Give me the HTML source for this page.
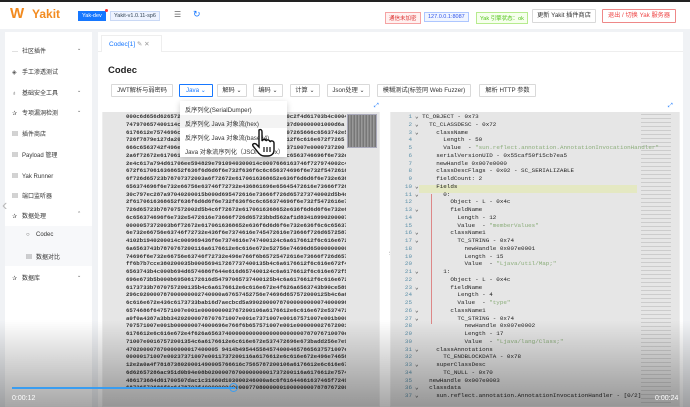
<!DOCTYPE html><html><head><meta charset="utf-8"><style>
*{box-sizing:border-box;margin:0;padding:0}
body{width:690px;height:407px;overflow:hidden;background:#f0f2f5;font-family:"Liberation Sans","Noto Sans CJK SC",sans-serif;position:relative;font-size:7px;color:#333}
.abs{position:absolute}
.top{left:0;top:0;width:690px;height:29px;background:#fff;border-top:2px solid #222}
.tag{position:absolute;font-size:5.5px;padding:1px 3px;border:1px solid}
.btn{position:absolute;border:1px solid #d9d9d9;background:#fff;font-size:6.2px;height:13px;line-height:11px;text-align:center;border-radius:1px}
.side{left:5px;top:32px;width:87px;height:375px;background:#fff}
.si{position:absolute;left:12px;font-size:6px;color:#333}
.si i{font-style:normal;display:inline-block;width:10px;color:#555}
.chev{position:absolute;left:77px;font-size:5px;color:#555}
.hex{position:absolute;left:126px;top:113px;width:220px;overflow:hidden;font-family:"Liberation Mono",monospace;font-size:5.7px;line-height:7.75px;font-weight:bold;color:#333;white-space:pre}
.code{position:absolute;left:398px;top:113px;font-family:"Liberation Mono",monospace;font-size:5.9px;line-height:7.75px;color:#222;white-space:pre}
.ln{color:#5a8fa8;display:inline-block;width:14px;text-align:right;margin-right:3px}
.s{color:#8bad7a}
</style></head><body>
<div class="abs top"></div>
<div class="abs" style="left:10px;top:5px;color:#f28b20;font-size:15px;font-weight:bold;letter-spacing:-1px">W</div>
<div class="abs" style="left:32px;top:7px;color:#f28b20;font-size:12px;font-weight:bold">Yakit</div>
<div class="tag" style="left:78px;top:11px;background:#1677ff;color:#fff;border-color:#1677ff">Yak-dev</div>
<div class="abs" style="left:105px;top:9px;width:3px;height:3px;border-radius:50%;background:#f33"></div>
<div class="tag" style="left:110px;top:11px;background:#eef3ff;color:#345;border-color:#c9d8f5">Yakit-v1.0.11-sp6</div>
<div class="abs" style="left:174px;top:10px;color:#666;font-size:8px">☰</div>
<div class="abs" style="left:193px;top:9px;color:#1677ff;font-size:9px">↻</div>
<div class="tag" style="left:385px;top:12px;background:#fff1f0;color:#d33;border-color:#f5a3a3">通信未加密</div>
<div class="tag" style="left:424px;top:12px;background:#f0f5ff;color:#2f54eb;border-color:#adc6ff">127.0.0.1:8087</div>
<div class="tag" style="left:476px;top:12px;background:#f6ffed;color:#52c41a;border-color:#b7eb8f">Yak 引擎状态：ok</div>
<div class="btn" style="left:532px;top:9px;width:64px;height:14px;line-height:12px">更新 Yakit 插件商店</div>
<div class="btn" style="left:602px;top:9px;width:74px;height:14px;line-height:12px;color:#e44;border-color:#e88">退出 / 切换 Yak 服务器</div>

<div class="abs side"></div>
<div class="si" style="top:46px"><i>···</i>社区插件</div><div class="chev" style="top:46px">⌄</div>
<div class="si" style="top:67px"><i>◈</i>手工渗透测试</div>
<div class="si" style="top:88px"><i>♁</i>基础安全工具</div><div class="chev" style="top:88px">⌄</div>
<div class="si" style="top:108px"><i>✰</i>专项漏洞检测</div><div class="chev" style="top:108px">⌄</div>
<div class="si" style="top:129px"><i>▤</i>插件商店</div>
<div class="si" style="top:150px"><i>▤</i>Payload 管理</div>
<div class="si" style="top:171px"><i>▤</i>Yak Runner</div>
<div class="si" style="top:191px"><i>▤</i>端口监听器</div>
<div class="si" style="top:211px"><i>✰</i>数据处理</div><div class="chev" style="top:211px">⌃</div>
<div class="abs" style="left:5px;top:226px;width:87px;height:40px;background:#f7f8fa"></div>
<div class="si" style="left:26px;top:232px"><i>○</i>Codec</div>
<div class="si" style="left:26px;top:252px"><i>▤</i>数据对比</div>
<div class="si" style="top:273px"><i>✰</i>数据库</div><div class="chev" style="top:273px">⌄</div>
<div class="abs" style="left:2px;top:197px;color:#bbb;font-size:16px">‹</div>

<div class="abs" style="left:98px;top:32px;width:585px;height:375px;background:#fff"></div>
<div class="abs" style="left:98px;top:51px;width:585px;height:1px;background:#eee"></div>
<div class="abs" style="left:101px;top:35px;width:61px;height:17px;border:1px solid #eee;border-bottom:none;background:#fff"></div>
<div class="abs" style="left:109px;top:40px;color:#1677ff;font-size:6.5px">Codec[1] <span style="color:#999">✎ ✕</span></div>
<div class="abs" style="left:108px;top:65px;font-size:9.5px;font-weight:bold;color:#222">Codec</div>
<div class="btn" style="left:111px;top:84px;width:62px">JWT解析与弱密码</div>
<div class="btn" style="left:179px;top:84px;width:34px;color:#1677ff;border-color:#1677ff">Java ⌄</div>
<div class="btn" style="left:217px;top:84px;width:30px">解码 ⌄</div>
<div class="btn" style="left:253px;top:84px;width:30px">编码 ⌄</div>
<div class="btn" style="left:290px;top:84px;width:30px">计算 ⌄</div>
<div class="btn" style="left:327px;top:84px;width:43px">Json处理 ⌄</div>
<div class="btn" style="left:377px;top:84px;width:94px">模糊测试(标签同 Web Fuzzer)</div>
<div class="btn" style="left:479px;top:84px;width:57px">解析 HTTP 参数</div>

<div class="abs" style="left:102px;top:101px;width:278px;height:306px;background:#e6e6e6;border:1px solid #eee"></div>
<div class="abs" style="left:102px;top:101px;width:278px;height:11px;background:#fff"></div>
<div class="abs" style="left:374px;top:103px;color:#1677ff;font-size:6px">⤢</div>
<div class="abs" style="left:347px;top:114px;width:30px;height:34px;background:repeating-linear-gradient(90deg,#777 0 1px,#999 1px 2px,#888 2px 3px);border:1px solid #aab"></div>
<div class="hex">000c6d656d62657250000000000000000000000000000000c2f4d61703b4c0004
747970657400114c6a0000000000000000000000000000737d00000001000d6a
6176612e7574696c2e0000000000000000000000000000007265666c6563742e50
726f7879e127da20cc0000000000000000000000000000812f6c616e672f7265
666c6563742f496e7000000000000000000000000000007371007e0000737200
2a6f72672e6170616368652e636f6d6d6f6e732e636f6c6c6563746696f6e732e6d6170
2e4c617a794d61706ee594829e7910940300014c0007666163746f727974002c4c6f72
672f6170616368652f636f6d6d6f6e732f636f6c6c656374696f6e732f5472616e7366
6f726d65723b78707372003a6f72672e6170616368652e636f6d6d6f6e732e636f6c6c
656374696f6e732e66756e63746f72732e436861696e65645472616e73666f726d6572
30c797ec287a97040200015b000d695472616e73666f726d657273740002d5b4c6f7267
2f6170616368652f636f6d6d6f6e732f636f6c6c656374696f6e732f5472616e73666f
726d65723b78707572002d5b4c6f72672e6170616368652e636f6d6d6f6e732e636f6c
6c656374696f6e732e5472616e73666f726d65723bbd562af1d83418990200007870000
0000057372003b6f72672e6170616368652e636f6d6d6f6e732e636f6c6c656374696f
6e732e66756e63746f72732e436f6e7374616e745472616e73666f726d657258769011
4102b1940200014c000969436f6e7374616e747400124c6a6176612f6c616e672f4f62
6a6563743b7870767200116a6176612e6c616e672e52756e74696d650000000000000
74696f6e732e66756e63746f72732e496e766f6b65725472616e73666f726d657287e8
ff6b7b7cce380200035b000569417267737400135b4c6a6176612f6c616e672f4f626a
6563743b4c000b694d6574686f644e616d657400124c6a6176612f6c616e672f537472
696e673b5b000b69506172616d54797065737400125b4c6a6176612f6c616e672f436c
6173733b7870757200135b4c6a6176612e6c616e672e4f626a6563743b90ce589f1073
296c020000787000000002740000a67657452756e74696d657572000125b4c6a6176612e
6c616e672e436c6173733bab16d7aecbcd5a990200007870000000000740000967657440
6574686f647571007e001e000000002767200106a6176612e6c616e672e537472696e67
a0f0a4387a3bb34202000078707671007e001e7371007e00167571007e001b00000002
707571007e001b000000074000696e766f6b657571007e001e000000027672001006a
6176612e6c616e672e4f626a6563740000000000000000000000787076710070e001b73
71007e00167572001354c6a6176612e6c616e672e537472696e673badd256e7e91d7b
470200007870000000017400005 9414b4954455845740004657865637571007e001e00
00000171007e00237371007e0011737200116a6176612e6c616e672e496e7465676572
12e2a0a4f7818738020001490005766616c7565787200106a6176612e6c616e672e4e75
6d62657286ac951d0b94e08b0200007870000000001737200116a6176612e7574696c2e
486173684d61700507dac1c31660d103000246000a6c6f61644661637465f72490000974
68726573686f6c6478703f4000000000000077080000001000000007878767200126a</div>

<div class="abs" style="left:389px;top:249px;color:#888;font-size:6px">⇆</div>

<div class="abs" style="left:390px;top:101px;width:290px;height:306px;background:#e6e6e6;border:1px solid #eee"></div>
<div class="abs" style="left:390px;top:101px;width:290px;height:11px;background:#fff"></div>
<div class="abs" style="left:668px;top:103px;color:#1677ff;font-size:6px">⤢</div>
<div class="abs" style="left:419px;top:185px;width:218px;height:8px;background:#e4e8c2"></div>
<div class="abs" style="left:431px;top:194px;width:1px;height:130px;background:#d88"></div>
<div class="abs" style="left:641px;top:114px;width:30px;height:290px;background:repeating-linear-gradient(180deg,#bbb 0 1px,transparent 1px 4px);opacity:.6"></div>
<div class="code"><span class="ln">1</span>⌄ TC_OBJECT - 0x73
<span class="ln">2</span>⌄   TC_CLASSDESC - 0x72
<span class="ln">3</span>⌄     className
<span class="ln">4</span>        Length - 50
<span class="ln">5</span>        Value  - <span class="s">"sun.reflect.annotation.AnnotationInvocationHandler"</span>
<span class="ln">6</span>      serialVersionUID - 0x55caf50f15cb7ea5
<span class="ln">7</span>      newHandle 0x007e0000
<span class="ln">8</span>      classDescFlags - 0x02 - SC_SERIALIZABLE
<span class="ln">9</span>      fieldCount: 2
<span class="ln">10</span>⌄     Fields
<span class="ln">11</span>⌄       0:
<span class="ln">12</span>          Object - L - 0x4c
<span class="ln">13</span>⌄         fieldName
<span class="ln">14</span>            Length - 12
<span class="ln">15</span>            Value  - <span class="s">"memberValues"</span>
<span class="ln">16</span>⌄         className1
<span class="ln">17</span>⌄           TC_STRING - 0x74
<span class="ln">18</span>              newHandle 0x007e0001
<span class="ln">19</span>              Length - 15
<span class="ln">20</span>              Value  - <span class="s">"Ljava/util/Map;"</span>
<span class="ln">21</span>⌄       1:
<span class="ln">22</span>          Object - L - 0x4c
<span class="ln">23</span>⌄         fieldName
<span class="ln">24</span>            Length - 4
<span class="ln">25</span>            Value  - <span class="s">"type"</span>
<span class="ln">26</span>⌄         className1
<span class="ln">27</span>⌄           TC_STRING - 0x74
<span class="ln">28</span>              newHandle 0x007e0002
<span class="ln">29</span>              Length - 17
<span class="ln">30</span>              Value  - <span class="s">"Ljava/lang/Class;"</span>
<span class="ln">31</span>⌄     classAnnotations
<span class="ln">32</span>        TC_ENDBLOCKDATA - 0x78
<span class="ln">33</span>⌄     superClassDesc
<span class="ln">34</span>        TC_NULL - 0x70
<span class="ln">35</span>    newHandle 0x007e0003
<span class="ln">36</span>⌄   classdata
<span class="ln">37</span>⌄     sun.reflect.annotation.AnnotationInvocationHandler - [0/2]</div>

<div class="abs" style="left:180px;top:101px;width:107px;height:56px;background:#fff;box-shadow:0 2px 6px rgba(0,0,0,.2)"></div>
<div class="abs" style="left:180px;top:115px;width:107px;height:13px;background:#f3f3f3"></div>
<div class="abs" style="left:185px;top:104px;font-size:6.2px;color:#333;line-height:14px">反序列化(SerialDumper)<br>反序列化 Java 对象流(hex)<br>反序列化 Java 对象流(base64)<br>Java 对象流序列化（JSON=&gt;Hex）</div>
<svg class="abs" style="left:252px;top:128px" width="26" height="30" viewBox="0 0 26 30"><path d="M7 2c2-1 3 0 3 2v9c1-2 4-2 4 0 1-2 4-1 4 1 1-2 4-1 4 1v7c0 4-3 6-6 6h-4c-3 0-5-2-7-5l-4-5c-1-2 1-3 3-2l3 3V4z" fill="#fff" stroke="#111" stroke-width="1.4"/><path d="M12 19v5M15 19v5M18 19v5" stroke="#111" stroke-width="1.2"/></svg>

<div class="abs" style="left:0;top:320px;width:690px;height:87px;background:linear-gradient(180deg,rgba(0,0,0,0),rgba(0,0,0,.35))"></div>
<div class="abs" style="left:12px;top:387px;width:223px;height:2px;background:#3a9df0"></div>
<div class="abs" style="left:229px;top:383px;width:9px;height:9px;border-radius:50%;border:1.5px solid #3a9df0"></div>
<div class="abs" style="left:12px;top:395px;color:#fff;font-size:7px">0:00:12</div>
<div class="abs" style="left:655px;top:395px;color:#fff;font-size:7px">0:00:24</div>
</body></html>
